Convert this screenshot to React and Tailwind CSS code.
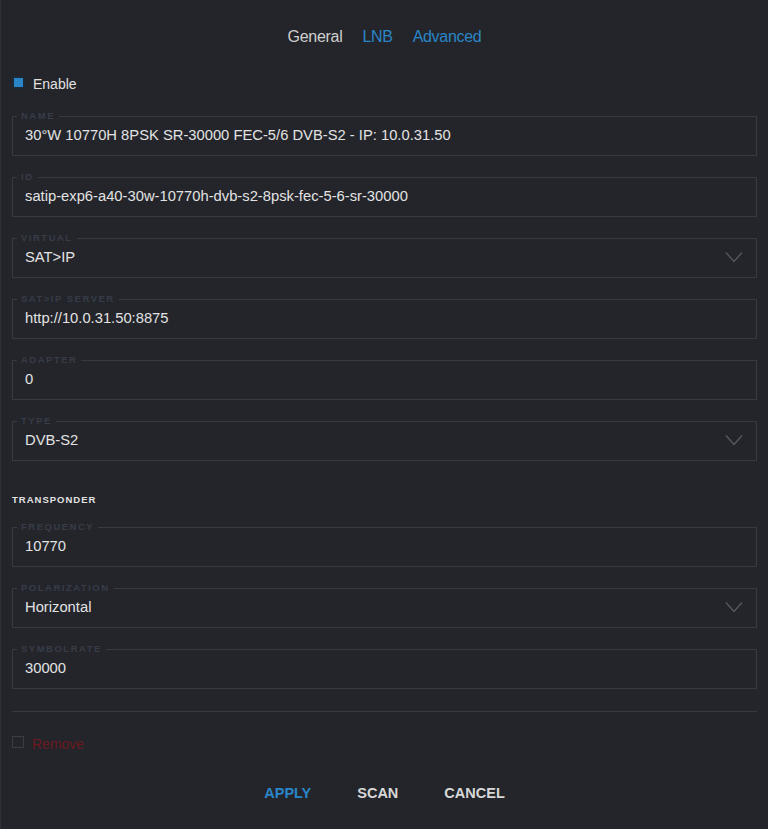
const Chevron = () => (
  <svg width="18" height="12" viewBox="0 0 18 12" className="mr-[1px]">
    <polyline points="1,1.5 9,10.5 17,1.5" fill="none" stroke="#555a63" strokeWidth="1.3" />
  </svg>
);

const Field = ({ label, value, select }) => (
  <fieldset className="border border-[#363a44] px-[12px] pt-[3px] pb-[9px] mb-[16px]">
    <legend className="ml-[-8px] px-[4px] text-[9.5px] leading-[10px] font-bold tracking-[1.5px] text-[#373c47] uppercase">
      {label}
    </legend>
    <div className="flex items-center justify-between h-[22px]">
      <span className="text-[14.75px] text-[#e2e2e2]">{value}</span>
      {select && <Chevron />}
    </div>
  </fieldset>
);

export default function App() {
  return (
    <div
      className="min-h-[829px] bg-[#23252b] border-l border-[#2e3139] px-[11px] pt-[26px]"
      style={{ fontFamily: '"Liberation Sans", Arial, sans-serif' }}
    >
      <div className="flex justify-center gap-[20px] text-[16px] leading-[22px] tracking-[-0.3px]">
        <span className="text-[#cfcfcf]">General</span>
        <span className="text-[#2a86c8]">LNB</span>
        <span className="text-[#2a86c8]">Advanced</span>
      </div>

      <div className="flex items-center mt-[26px] mb-[16px]">
        <div className="w-[13px] h-[13px] bg-[#2a86c8] border-2 border-[#1c2a38] mt-[-5px]"></div>
        <span className="ml-[8px] text-[14px] text-[#e2e2e2]">Enable</span>
      </div>

      <Field label="Name" value="30°W 10770H 8PSK SR-30000 FEC-5/6 DVB-S2 - IP: 10.0.31.50" />
      <Field label="ID" value="satip-exp6-a40-30w-10770h-dvb-s2-8psk-fec-5-6-sr-30000" />
      <Field label="Virtual" value="SAT>IP" select />
      <Field label="SAT>IP Server" value="http://10.0.31.50:8875" />
      <Field label="Adapter" value="0" />
      <Field label="Type" value="DVB-S2" select />

      <div className="mt-[32px] mb-[15px] text-[9.5px] font-bold tracking-[1px] text-[#e2e2e2]">TRANSPONDER</div>

      <Field label="Frequency" value="10770" />
      <Field label="Polarization" value="Horizontal" select />
      <Field label="Symbolrate" value="30000" />

      <div className="border-t border-[#363a44] mt-[22px]"></div>

      <div className="flex items-center mt-[22px]">
        <div className="w-[12px] h-[12px] border border-[#3a3d44] mt-[-6px]"></div>
        <span className="ml-[8px] text-[14px] text-[#6a1a1f]">Remove</span>
      </div>

      <div className="flex justify-center gap-[46px] mt-[28px] text-[14.5px] font-bold">
        <span className="text-[#2a86c8]">APPLY</span>
        <span className="text-[#d8d8d8]">SCAN</span>
        <span className="text-[#d8d8d8]">CANCEL</span>
      </div>
    </div>
  );
}
